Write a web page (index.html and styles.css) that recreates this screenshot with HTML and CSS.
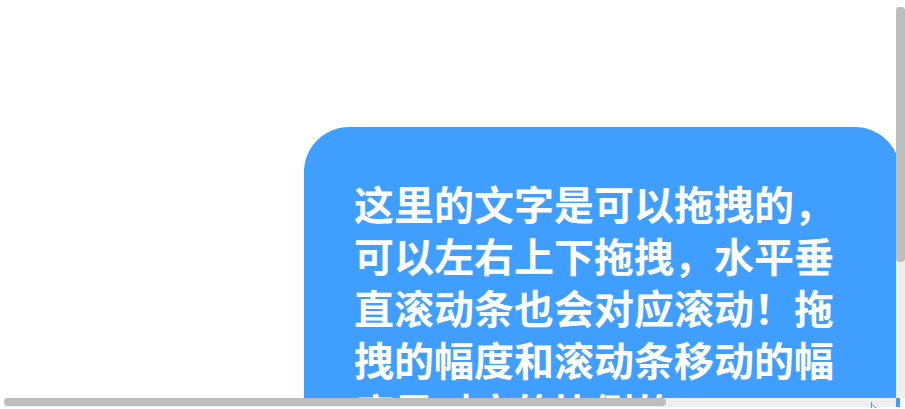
FILE: index.html
```html
<!DOCTYPE html>
<html lang="zh-CN">
<head>
<meta charset="utf-8">
<title>拖拽滚动</title>
<link rel="stylesheet" href="styles.css">
</head>
<body>
<div class="scroller">
  <div class="canvas">
    <div class="card">这里的文字是可以拖拽的，可以左右上下拖拽，水平垂直滚动条也会对应滚动！拖拽的幅度和滚动条移动的幅度是对应的比例的！</div>
  </div>
  <div class="vbar"><div class="vthumb"></div></div>
  <div class="hbar"><div class="hthumb"></div></div>
  <div class="corner"></div>
  <svg class="cursor" width="7" height="8" viewBox="0 0 7 8"><path d="M1 0v7h1V3l1 1v1h1v1h1v1h1V6H5V5H4V4H3V3H2V1H1z" fill="#409eff"/></svg>
</div>
</body>
</html>
```
FILE: styles.css
```css
html, body {
  margin: 0;
  padding: 0;
  background: #fff;
}
.scroller {
  position: relative;
  width: 905px;
  height: 409px;
  overflow: hidden;
}
.canvas {
  display: inline-block;
  padding: 127px 304px;
}
.card {
  width: 496px;
  padding: 50px;
  background: #409eff;
  border-radius: 45px;
  color: #fff;
  font-family: "Noto Sans CJK SC", "Noto Sans", sans-serif;
  font-weight: bold;
  font-size: 40px;
  line-height: 52px;
}
/* overlay scrollbars */
.vbar {
  position: absolute;
  top: 0;
  right: 0;
  width: 9px;
  height: 398px;
  background: linear-gradient(#fff 0 7px, #eeeeee 7px);
}
.vthumb {
  margin-top: 7px;
  height: 255px;
  background: #bdbdbd;
  border-radius: 4px;
}
.hbar {
  position: absolute;
  left: 0;
  top: 398px;
  width: 896px;
  height: 9px;
  background: linear-gradient(to right, #fff 0 4px, #eeeeee 4px);
}
.hthumb {
  margin-left: 4px;
  width: 662px;
  height: 8px;
  background: #bdbdbd;
  border-radius: 4px;
}
.corner {
  position: absolute;
  left: 0;
  top: 407px;
  width: 905px;
  height: 2px;
  background: #fff;
}
.cursor {
  position: absolute;
  left: 870px;
  top: 401px;
}
```
